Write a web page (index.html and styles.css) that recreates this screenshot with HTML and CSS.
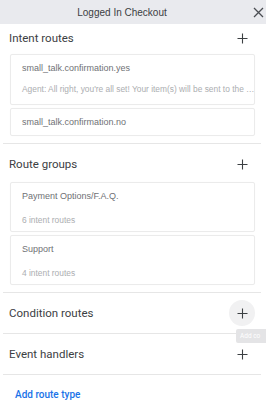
FILE: index.html
```html
<!DOCTYPE html>
<html>
<head>
<meta charset="utf-8">
<link rel="stylesheet" href="styles.css">
</head>
<body>
<div class="panel">
  <div class="topbar">
    <div class="title">Logged In Checkout</div>
    <button class="close" aria-label="Close">
      <svg width="11" height="11" viewBox="0 0 11 11"><path d="M1 1L10 10M10 1L1 10" stroke="#4a4d52" stroke-width="1.3" fill="none"/></svg>
    </button>
  </div>

  <section class="group">
    <div class="group-head first">
      <span class="group-name">Intent routes</span>
      <span class="add"><svg width="11" height="11" viewBox="0 0 11 11"><path d="M5.5 0.5V10.5M0.5 5.5H10.5" stroke="#3c4043" stroke-width="1.1" fill="none"/></svg></span>
    </div>
    <div class="cards">
      <div class="card">
        <div class="card-title">small_talk.confirmation.yes</div>
        <div class="card-sub">Agent: All right, you're all set! Your item(s) will be sent to the …</div>
      </div>
      <div class="card">
        <div class="card-title">small_talk.confirmation.no</div>
      </div>
    </div>
  </section>

  <section class="group">
    <div class="group-head">
      <span class="group-name">Route groups</span>
      <span class="add"><svg width="11" height="11" viewBox="0 0 11 11"><path d="M5.5 0.5V10.5M0.5 5.5H10.5" stroke="#3c4043" stroke-width="1.1" fill="none"/></svg></span>
    </div>
    <div class="cards">
      <div class="card rg">
        <div class="card-title">Payment Options/F.A.Q.</div>
        <div class="card-sub">6 intent routes</div>
      </div>
      <div class="card rg">
        <div class="card-title">Support</div>
        <div class="card-sub">4 intent routes</div>
      </div>
    </div>
  </section>

  <section class="group simple">
    <div class="group-head">
      <span class="group-name">Condition routes</span>
      <span class="add hover"><svg width="11" height="11" viewBox="0 0 11 11"><path d="M5.5 0.5V10.5M0.5 5.5H10.5" stroke="#3c4043" stroke-width="1.1" fill="none"/></svg></span>
      <span class="tooltip">Add co</span>
    </div>
  </section>

  <section class="group simple">
    <div class="group-head">
      <span class="group-name">Event handlers</span>
      <span class="add"><svg width="11" height="11" viewBox="0 0 11 11"><path d="M5.5 0.5V10.5M0.5 5.5H10.5" stroke="#3c4043" stroke-width="1.1" fill="none"/></svg></span>
    </div>
  </section>

  <div class="footer">
    <a class="add-type" href="#">Add route type</a>
  </div>
</div>
</body>
</html>
```

FILE: styles.css
```css
html, body {
  margin: 0;
  padding: 0;
  background: #ffffff;
}
body {
  width: 266px;
  height: 404px;
  overflow: hidden;
  font-family: Roboto, "Liberation Sans", Arial, sans-serif;
}
.panel {
  display: flex;
  flex-direction: column;
}
.topbar {
  height: 24px;
  background: #e9eaee;
  display: flex;
  align-items: center;
}
.title {
  flex: 1;
  padding-right: 6px;
  text-align: center;
  font-family: "Liberation Sans", Arial, sans-serif;
  font-size: 10px;
  color: #3c4043;
}
.close {
  width: 16px;
  height: 24px;
  padding: 0;
  border: 0;
  background: none;
  display: flex;
  align-items: center;
  justify-content: center;
}
.group {
  margin: 0 5px 0 3px;
  border-bottom: 1px solid #e6e6e6;
  padding-bottom: 7px;
}
.group.simple {
  padding-bottom: 0;
}
.group-head {
  position: relative;
  height: 36px;
  padding: 2px 14px 0 6px;
  display: flex;
  align-items: center;
  justify-content: space-between;
}
.group-head.first {
  height: 28px;
  padding-top: 0;
  margin-bottom: 2px;
}
.group.simple .group-head {
  height: 40px;
  padding-top: 0;
}
.group-name {
  font-size: 11.5px;
  color: #3c4043;
}
.add {
  width: 26px;
  height: 26px;
  margin-right: -8px;
  border-radius: 50%;
  display: flex;
  align-items: center;
  justify-content: center;
}
.add.hover {
  background: #f1f1f2;
}
.tooltip {
  position: absolute;
  left: 233px;
  top: 36px;
  width: 28px;
  height: 14px;
  padding: 0 0 0 4px;
  line-height: 14px;
  background: #e4e4e6;
  color: #ffffff;
  font-size: 6.5px;
  border-radius: 2px 0 0 2px;
  white-space: nowrap;
  z-index: 2;
}
.cards {
  display: flex;
  flex-direction: column;
  gap: 3px;
  padding: 0 6px 0 7px;
}
.card {
  border: 1px solid #ebebeb;
  border-radius: 2px;
  box-shadow: 0 0 1px rgba(0,0,0,0.04);
  padding: 7px 4px 7px 11px;
  font-family: "Liberation Sans", Arial, sans-serif;
}
.card-title {
  font-size: 9px;
  line-height: 12px;
  color: #6f7175;
  white-space: nowrap;
}
.card-sub {
  margin-top: 9px;
  margin-bottom: 2px;
  font-size: 8.4px;
  line-height: 12px;
  color: #acaeb1;
  white-space: nowrap;
}
.card.rg .card-sub {
  margin-top: 12px;
  margin-bottom: -2px;
}
.footer {
  padding: 14px 15px 0;
  font-size: 10px;
  line-height: 12px;
}
.add-type {
  font-size: 10px;
  font-weight: 500;
  color: #1a73e8;
  text-decoration: none;
}
```
